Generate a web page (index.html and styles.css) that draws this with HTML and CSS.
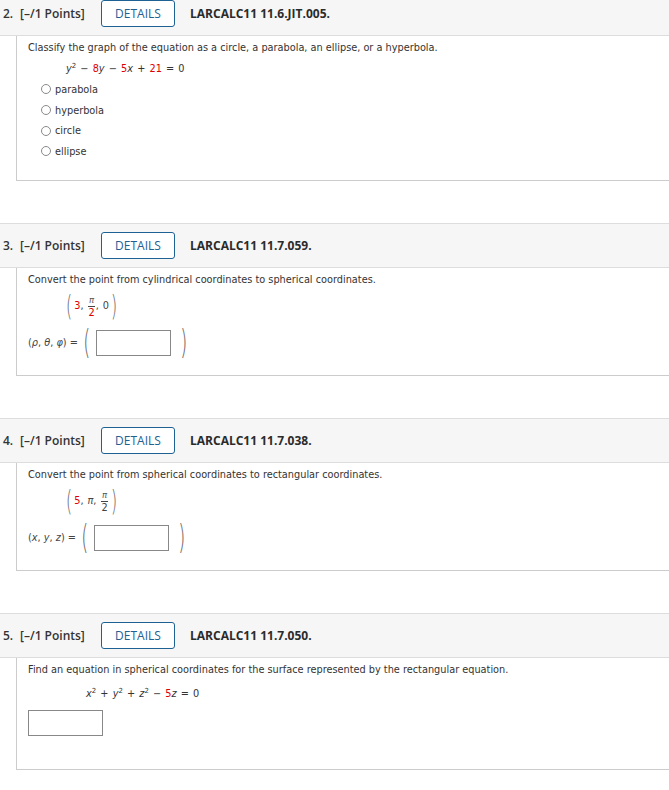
FILE: index.html
```html
<!DOCTYPE html>
<html>
<head>
<meta charset="utf-8">
<link rel="stylesheet" href="styles.css">
</head>
<body>
<div class="page">

  <section class="question">
    <div class="q-head">
      <span class="q-points"><span class="q-num">2.</span>[–/1 Points]</span>
      <button class="btn-details">DETAILS</button>
      <span class="q-code">LARCALC11 11.6.JIT.005.</span>
    </div>
    <div class="q-body body-1">
      <p class="prompt">Classify the graph of the equation as a circle, a parabola, an ellipse, or a hyperbola.</p>
      <div class="eq eq-1"><i>y</i><sup>2</sup> <span class="op">−</span> <span class="red">8</span><i>y</i> <span class="op">−</span> <span class="red">5</span><i>x</i> <span class="op">+</span> <span class="red">21</span> <span class="op">=</span> 0</div>
      <ul class="choices">
        <li class="choice"><span class="radio"></span>parabola</li>
        <li class="choice"><span class="radio"></span>hyperbola</li>
        <li class="choice"><span class="radio"></span>circle</li>
        <li class="choice"><span class="radio"></span>ellipse</li>
      </ul>
    </div>
  </section>

  <section class="question">
    <div class="q-head">
      <span class="q-points"><span class="q-num">3.</span>[–/1 Points]</span>
      <button class="btn-details">DETAILS</button>
      <span class="q-code">LARCALC11 11.7.059.</span>
    </div>
    <div class="q-body body-2">
      <p class="prompt">Convert the point from cylindrical coordinates to spherical coordinates.</p>
      <div class="point">
        <span class="paren">(</span>
        <span class="red">3</span><span class="comma">,</span>
        <span class="frac"><span class="num"><i>π</i></span><span class="den red">2</span></span><span class="comma">,</span>
        <span class="pv">0</span>
        <span class="paren">)</span>
      </div>
      <div class="answer">
        <span class="label">(<i>ρ</i>, <i>θ</i>, <i>φ</i>) =</span>
        <span class="paren big">(</span>
        <span class="input"></span>
        <span class="paren big after">)</span>
      </div>
    </div>
  </section>

  <section class="question">
    <div class="q-head">
      <span class="q-points"><span class="q-num">4.</span>[–/1 Points]</span>
      <button class="btn-details">DETAILS</button>
      <span class="q-code">LARCALC11 11.7.038.</span>
    </div>
    <div class="q-body body-2">
      <p class="prompt">Convert the point from spherical coordinates to rectangular coordinates.</p>
      <div class="point">
        <span class="paren">(</span>
        <span class="red">5</span><span class="comma">,</span>
        <span class="pv"><i>π</i></span><span class="comma">,</span>
        <span class="frac"><span class="num"><i>π</i></span><span class="den">2</span></span>
        <span class="paren">)</span>
      </div>
      <div class="answer">
        <span class="label">(<i>x</i>, <i>y</i>, <i>z</i>) =</span>
        <span class="paren big">(</span>
        <span class="input"></span>
        <span class="paren big after">)</span>
      </div>
    </div>
  </section>

  <section class="question">
    <div class="q-head">
      <span class="q-points"><span class="q-num">5.</span>[–/1 Points]</span>
      <button class="btn-details">DETAILS</button>
      <span class="q-code">LARCALC11 11.7.050.</span>
    </div>
    <div class="q-body body-4">
      <p class="prompt">Find an equation in spherical coordinates for the surface represented by the rectangular equation.</p>
      <div class="eq eq-4"><i>x</i><sup>2</sup> <span class="op">+</span> <i>y</i><sup>2</sup> <span class="op">+</span> <i>z</i><sup>2</sup> <span class="op">−</span> <span class="red">5</span><i>z</i> <span class="op">=</span> 0</div>
      <span class="input solo"></span>
    </div>
  </section>

</div>
</body>
</html>
```

FILE: styles.css
```css
html, body {
  margin: 0;
  padding: 0;
  background: #ffffff;
}

.page {
  margin-top: -9px;
}

.question {
  margin-bottom: 42px;
}

.q-head {
  display: flex;
  align-items: center;
  height: 43px;
  background: #f6f6f6;
  border-top: 1px solid #dddddd;
  border-bottom: 1px solid #dddddd;
  font-family: "Open Sans", "Liberation Sans", sans-serif;
  font-size: 12px;
  color: #333333;
}

.q-points {
  width: 98px;
  padding-left: 3px;
  font-weight: 600;
  white-space: nowrap;
}

.q-num {
  display: inline-block;
  width: 17px;
}

.btn-details {
  box-sizing: border-box;
  width: 74px;
  height: 27px;
  padding: 0;
  background: #ffffff;
  border: 1px solid #1e6193;
  border-radius: 3px;
  font-family: "Open Sans", "Liberation Sans", sans-serif;
  font-size: 12px;
  color: #1e6193;
}

.q-code {
  margin-left: 15px;
  font-weight: 700;
  color: #2b2b2b;
}

.q-body {
  margin-left: 16px;
  border-left: 1px solid #cccccc;
  border-bottom: 1px solid #cccccc;
  padding: 5px 0 0 11px;
  font-family: "DejaVu Sans", Verdana, sans-serif;
  font-size: 9.75px;
  color: #333333;
}

.body-1 { padding-bottom: 18px; }
.body-2 { padding-bottom: 18px; }
.body-4 { padding-bottom: 33px; }

.prompt {
  margin: 0;
  line-height: 14px;
}

.eq {
  line-height: 14px;
  white-space: nowrap;
}

.eq-1 {
  margin: 7px 0 0 38px;
}

.eq-4 {
  margin: 10px 0 0 58px;
}

.eq sup {
  font-size: 7px;
  vertical-align: 4px;
  line-height: 0;
}

.op {
  margin: 0 1px;
}

.red {
  color: #e00000;
}

i {
  font-style: italic;
}

.choices {
  list-style: none;
  margin: 3px 0 0 13px;
  padding: 0;
}

.choice {
  display: flex;
  align-items: center;
  height: 20.7px;
}

.radio {
  box-sizing: border-box;
  width: 10px;
  height: 10px;
  border: 1px solid #8a8a8a;
  border-radius: 50%;
  margin-right: 4px;
  background: #ffffff;
}

.point {
  display: flex;
  align-items: center;
  height: 28px;
  margin: 5px 0 0 36px;
  color: #444444;
}

.paren {
  display: inline-block;
  font-family: "DejaVu Sans", sans-serif;
  font-weight: 200;
  font-size: 26px;
  line-height: 26px;
  color: #5e5e5e;
  transform: scaleX(0.6) scaleY(1.1);
}

.comma {
  margin-right: 4px;
}

.frac {
  display: inline-flex;
  flex-direction: column;
  align-items: center;
  font-size: 9.75px;
  line-height: 11px;
  margin-top: 1px;
}

.frac .num {
  border-bottom: 1px solid #444444;
  padding: 0 1px;
  color: #555555;
  font-size: 8.5px;
}

.frac .den {
  padding: 0 1px;
}

.answer {
  display: flex;
  align-items: center;
  height: 28px;
  margin-top: 9px;
  color: #444444;
}

.label {
  white-space: nowrap;
  margin-right: 3px;
}

.paren.big {
  font-size: 30px;
  line-height: 30px;
  transform: scaleX(0.6) scaleY(1.1);
}

.paren.big.after {
  margin-left: 7px;
}

.input {
  box-sizing: border-box;
  display: inline-block;
  width: 75px;
  height: 26px;
  border: 1px solid #888888;
  background: #ffffff;
  margin-left: 3px;
}

.input.solo {
  display: block;
  margin: 9px 0 0 0;
}
```
